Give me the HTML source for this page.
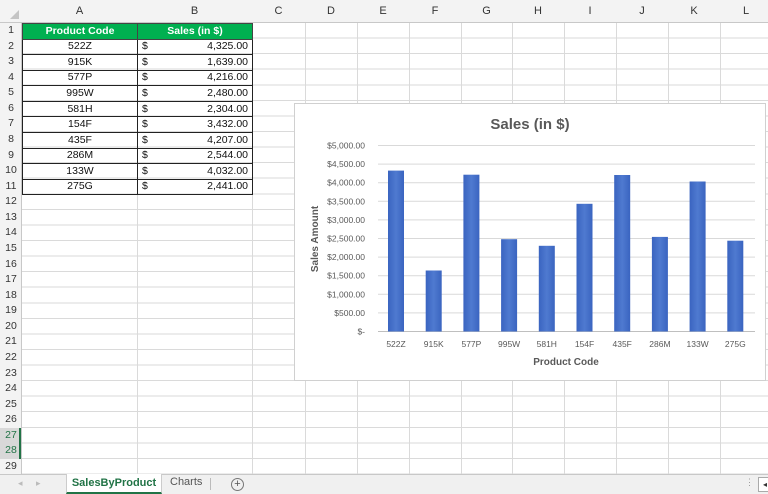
<!DOCTYPE html>
<html><head><meta charset="utf-8"><style>
*{margin:0;padding:0;box-sizing:border-box}
body{width:768px;height:494px;overflow:hidden;background:#fff;font-family:"Liberation Sans",sans-serif;position:relative}
.hl{position:absolute;left:0;top:23px;width:768px;height:451px;background:repeating-linear-gradient(to bottom,transparent 0,transparent 14.57px,#dadada 14.57px,#dadada 15.57px)}
.v{position:absolute;top:0;width:1px;height:474px;background:#dadada}
.colh{position:absolute;top:0;left:0;width:768px;height:23px;background:#f3f3f3;border-bottom:1px solid #c8c8c8}
.ch{position:absolute;top:0;height:23px;line-height:23px;text-align:center;font-size:11px;color:#333}
.rowh{position:absolute;left:0;top:23px;width:22px;height:451px;background:#f3f3f3;border-right:1px solid #c8c8c8}
.rn{position:absolute;left:0;width:22px;height:15.57px;line-height:15.57px;font-size:10.5px;color:#333;text-align:center}
.t{position:absolute;left:22px;top:23px;border-collapse:collapse;font-size:10.5px}
.t td{height:15.57px;padding:0 4px;border:1px solid #222;line-height:13px;color:#111}
.t td.a{width:115px;text-align:center}
.t td.b{width:115px}
.t tr.h td{background:#00b050;color:#fff;font-weight:bold;text-align:center;border-color:#444}
.b span{float:right}
.chart{position:absolute;left:294px;top:103px;width:472px;height:278px;background:#fff;border:1px solid #d0d0d0}
.tabs{position:absolute;left:0;top:474px;width:768px;height:20px;background:#f0f0f0;border-top:1px solid #c8c8c8}
</style></head><body>
<div class="hl"></div>
<div class="v" style="left:137px"></div><div class="v" style="left:252px"></div><div class="v" style="left:305px"></div><div class="v" style="left:357px"></div><div class="v" style="left:409px"></div><div class="v" style="left:461px"></div><div class="v" style="left:512px"></div><div class="v" style="left:564px"></div><div class="v" style="left:616px"></div><div class="v" style="left:668px"></div><div class="v" style="left:720px"></div>
<div class="colh">
<div style="position:absolute;left:10px;top:10px;width:0;height:0;border-left:9px solid transparent;border-bottom:9px solid #c4c4c4"></div>
<div class="ch" style="left:22px;width:115px">A</div><div class="ch" style="left:137px;width:115px">B</div><div class="ch" style="left:252px;width:53px">C</div><div class="ch" style="left:305px;width:52px">D</div><div class="ch" style="left:357px;width:52px">E</div><div class="ch" style="left:409px;width:52px">F</div><div class="ch" style="left:461px;width:51px">G</div><div class="ch" style="left:512px;width:52px">H</div><div class="ch" style="left:564px;width:52px">I</div><div class="ch" style="left:616px;width:52px">J</div><div class="ch" style="left:668px;width:52px">K</div><div class="ch" style="left:720px;width:52px">L</div>
</div>
<div class="rowh">
<div style="position:absolute;left:0;top:404.8px;width:21px;height:31.1px;background:#d8d8d8;border-right:2px solid #217346"></div>
<div class="rn" style="top:0">1</div><div class="rn" style="top:15.57px">2</div><div class="rn" style="top:31.14px">3</div><div class="rn" style="top:46.71px">4</div><div class="rn" style="top:62.28px">5</div><div class="rn" style="top:77.85px">6</div><div class="rn" style="top:93.42px">7</div><div class="rn" style="top:108.99px">8</div><div class="rn" style="top:124.56px">9</div><div class="rn" style="top:140.13px">10</div><div class="rn" style="top:155.7px">11</div><div class="rn" style="top:171.27px">12</div><div class="rn" style="top:186.84px">13</div><div class="rn" style="top:202.41px">14</div><div class="rn" style="top:217.98px">15</div><div class="rn" style="top:233.55px">16</div><div class="rn" style="top:249.12px">17</div><div class="rn" style="top:264.69px">18</div><div class="rn" style="top:280.26px">19</div><div class="rn" style="top:295.83px">20</div><div class="rn" style="top:311.4px">21</div><div class="rn" style="top:326.97px">22</div><div class="rn" style="top:342.54px">23</div><div class="rn" style="top:358.11px">24</div><div class="rn" style="top:373.68px">25</div><div class="rn" style="top:389.25px">26</div><div class="rn" style="top:404.82px;color:#217346">27</div><div class="rn" style="top:420.39px;color:#217346">28</div><div class="rn" style="top:435.96px">29</div>
</div>
<table class="t">
<tr class="h"><td class="a">Product Code</td><td class="b" style="text-align:center">Sales (in $)</td></tr>
<tr><td class="a">522Z</td><td class="b">$<span>4,325.00</span></td></tr>
<tr><td class="a">915K</td><td class="b">$<span>1,639.00</span></td></tr>
<tr><td class="a">577P</td><td class="b">$<span>4,216.00</span></td></tr>
<tr><td class="a">995W</td><td class="b">$<span>2,480.00</span></td></tr>
<tr><td class="a">581H</td><td class="b">$<span>2,304.00</span></td></tr>
<tr><td class="a">154F</td><td class="b">$<span>3,432.00</span></td></tr>
<tr><td class="a">435F</td><td class="b">$<span>4,207.00</span></td></tr>
<tr><td class="a">286M</td><td class="b">$<span>2,544.00</span></td></tr>
<tr><td class="a">133W</td><td class="b">$<span>4,032.00</span></td></tr>
<tr><td class="a">275G</td><td class="b">$<span>2,441.00</span></td></tr>
</table>
<div class="chart">
<svg width="472" height="278" style="position:absolute;left:-1px;top:-1px" font-family="Liberation Sans, sans-serif">
<defs><linearGradient id="g" x1="0" y1="0" x2="1" y2="0"><stop offset="0" stop-color="#3a64c0"/><stop offset="0.5" stop-color="#4f7ad0"/><stop offset="1" stop-color="#3a64c0"/></linearGradient></defs>
<text x="236" y="26" text-anchor="middle" font-size="15" font-weight="bold" fill="#595959">Sales (in $)</text>
<g stroke="#d9d9d9" stroke-width="1">
<line x1="84" x2="461" y1="42.5" y2="42.5"/><line x1="84" x2="461" y1="61.1" y2="61.1"/><line x1="84" x2="461" y1="79.7" y2="79.7"/><line x1="84" x2="461" y1="98.3" y2="98.3"/><line x1="84" x2="461" y1="116.9" y2="116.9"/><line x1="84" x2="461" y1="135.5" y2="135.5"/><line x1="84" x2="461" y1="154.1" y2="154.1"/><line x1="84" x2="461" y1="172.7" y2="172.7"/><line x1="84" x2="461" y1="191.3" y2="191.3"/><line x1="84" x2="461" y1="209.9" y2="209.9"/><line x1="84" x2="461" y1="228.5" y2="228.5" stroke="#bfbfbf"/>
</g>
<g font-size="8.5" fill="#595959" text-anchor="end">
<text x="71" y="45.5">$5,000.00</text><text x="71" y="64.1">$4,500.00</text><text x="71" y="82.7">$4,000.00</text><text x="71" y="101.3">$3,500.00</text><text x="71" y="119.9">$3,000.00</text><text x="71" y="138.5">$2,500.00</text><text x="71" y="157.1">$2,000.00</text><text x="71" y="175.7">$1,500.00</text><text x="71" y="194.3">$1,000.00</text><text x="71" y="212.9">$500.00</text><text x="71" y="231.5">$-</text>
</g>
<g fill="url(#g)">
<rect x="94" y="67.6" width="16" height="160.9"/><rect x="131.7" y="167.5" width="16" height="61"/><rect x="169.4" y="71.7" width="16" height="156.8"/><rect x="207.1" y="136.2" width="16" height="92.3"/><rect x="244.8" y="142.8" width="16" height="85.7"/><rect x="282.5" y="100.8" width="16" height="127.7"/><rect x="320.2" y="72" width="16" height="156.5"/><rect x="357.9" y="133.9" width="16" height="94.6"/><rect x="395.6" y="78.5" width="16" height="150"/><rect x="433.3" y="137.7" width="16" height="90.8"/>
</g>
<g font-size="8.5" fill="#595959" text-anchor="middle">
<text x="102" y="244">522Z</text><text x="139.7" y="244">915K</text><text x="177.4" y="244">577P</text><text x="215.1" y="244">995W</text><text x="252.8" y="244">581H</text><text x="290.5" y="244">154F</text><text x="328.2" y="244">435F</text><text x="365.9" y="244">286M</text><text x="403.6" y="244">133W</text><text x="441.3" y="244">275G</text>
</g>
<text x="272" y="262" text-anchor="middle" font-size="10" font-weight="bold" fill="#595959">Product Code</text>
<text transform="translate(24,136) rotate(-90)" text-anchor="middle" font-size="10" font-weight="bold" fill="#595959">Sales Amount</text>
</svg>
</div>
<div class="tabs">
<span style="position:absolute;left:18px;top:3px;font-size:9px;color:#bbb">◂</span><span style="position:absolute;left:36px;top:3px;font-size:9px;color:#bbb">▸</span>
<div style="position:absolute;left:66px;top:-1px;width:96px;height:20px;background:#fff;border-bottom:2px solid #217346;border-left:1px solid #ccc;border-right:1px solid #ccc;text-align:center;font-size:11px;font-weight:bold;color:#217346;line-height:18px">SalesByProduct</div>
<div style="position:absolute;left:170px;top:1px;font-size:11px;color:#555">Charts</div>
<div style="position:absolute;left:210px;top:3px;width:1px;height:12px;background:#bbb"></div>
<div style="position:absolute;left:231px;top:3px;width:13px;height:13px;border:1px solid #777;border-radius:50%;text-align:center;line-height:11px;font-size:11px;color:#555">+</div>
<span style="position:absolute;left:745px;top:2px;font-size:9px;color:#999">⋮</span>
<div style="position:absolute;left:758px;top:2px;width:14px;height:15px;border:1px solid #aaa;background:#fff;font-size:8px;line-height:13px;text-align:center;color:#333">◂</div>
</div>
</body></html>
